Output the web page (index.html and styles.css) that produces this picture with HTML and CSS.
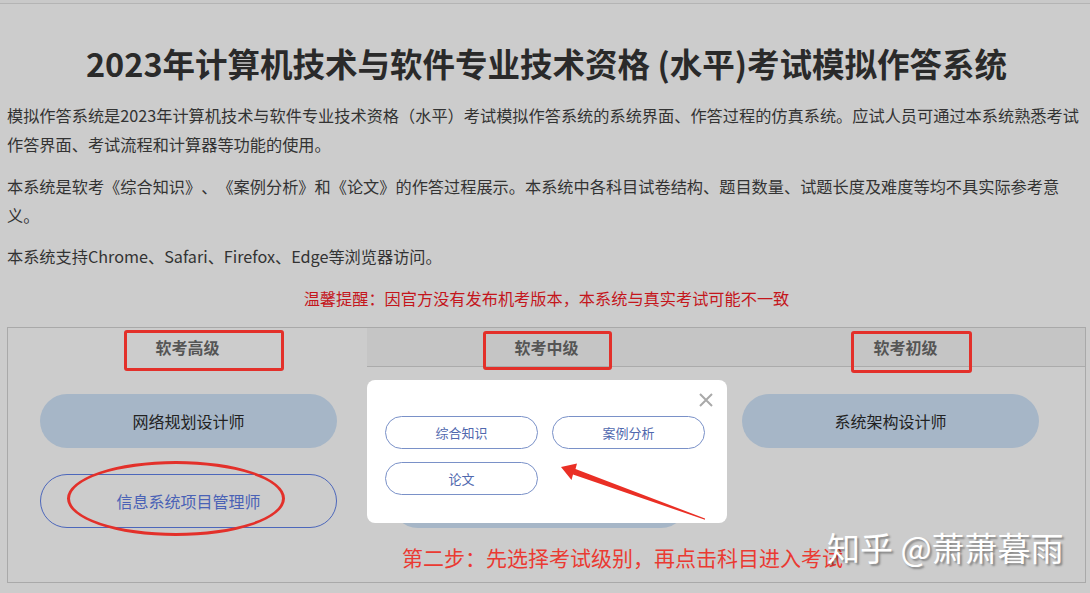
FILE: index.html
```html
<!DOCTYPE html>
<html lang="zh-CN">
<head>
  <meta charset="UTF-8" />
  <title>2023年计算机技术与软件专业技术资格 (水平)考试模拟作答系统</title>
  <link rel="stylesheet" href="styles.css">
</head>
<body>
  <div class="top-edge"></div>

  <h1 class="title">2023年计算机技术与软件专业技术资格 (水平)考试模拟作答系统</h1>

  <p class="intro">模拟作答系统是2023年计算机技术与软件专业技术资格（水平）考试模拟作答系统的系统界面、作答过程的仿真系统。应试人员可通过本系统熟悉考试作答界面、考试流程和计算器等功能的使用。</p>
  <p class="intro">本系统是软考《综合知识》、《案例分析》和《论文》的作答过程展示。本系统中各科目试卷结构、题目数量、试题长度及难度等均不具实际参考意义。</p>
  <p class="intro">本系统支持Chrome、Safari、Firefox、Edge等浏览器访问。</p>
  <p class="warn">温馨提醒：因官方没有发布机考版本，本系统与真实考试可能不一致</p>

  <div class="panel">
    <div class="tabs">
      <div class="tab active">软考高级</div>
      <div class="tab">软考中级</div>
      <div class="tab">软考初级</div>
    </div>
    <div class="cols">
      <div class="col col-1">
        <div class="pill filled">网络规划设计师</div>
        <div class="pill outline">信息系统项目管理师</div>
      </div>
      <div class="col col-2">
        <div class="pill filled">系统集成项目管理工程师</div>
      </div>
      <div class="col col-3">
        <div class="pill filled">系统架构设计师</div>
      </div>
    </div>

    <!-- 科目弹窗 -->
    <div class="modal">
      <span class="close">
        <svg width="14" height="14" viewBox="0 0 14 14"><path d="M1 1 L13 13 M13 1 L1 13" stroke="#a9a9a9" stroke-width="2" fill="none"/></svg>
      </span>
      <div class="subjects">
        <div class="subject">综合知识</div>
        <div class="subject">案例分析</div>
        <div class="subject">论文</div>
      </div>
    </div>
  </div>

  <!-- 标注 -->
  <div class="mark mark-1"></div>
  <div class="mark mark-2"></div>
  <div class="mark mark-3"></div>
  <div class="ring"></div>
  <svg class="arrow" width="1090" height="593" viewBox="0 0 1090 593">
    <polygon points="561,467 577,463.5 575.5,469 705,518.5 705,519.8 573,474.5 571.5,480" fill="#ea2f25"/>
  </svg>
  <div class="step">第二步：先选择考试级别，再点击科目进入考试</div>
  <div class="watermark">知乎 @萧萧暮雨</div>
</body>
</html>
```

FILE: styles.css
```css
body {
  margin: 0;
  padding: 0 4px 0 7px;
  background: #cccccc;
  font-family: "Noto Sans CJK SC", "Liberation Sans", sans-serif;
  color: #333;
  position: relative;
  height: 593px;
  overflow: hidden;
  text-spacing-trim: space-all;
}

.top-edge {
  height: 3px;
  margin: 0 -4px 0 -7px;
  background: #c9c9c9;
  border-bottom: 1px solid #b4b4b4;
}

.title {
  margin: 39px 0 18px;
  font-size: 32.5px;
  line-height: 40px;
  font-weight: bold;
  text-align: center;
  color: #2a2a2a;
}

.intro {
  margin: 0 0 12.5px;
  font-size: 16.2px;
  line-height: 29px;
  color: #333;
}

.warn {
  margin: 13px 0 14px;
  font-size: 16.2px;
  line-height: 29px;
  text-align: center;
  color: #c4161c;
}

.panel {
  position: relative;
  border: 1px solid #a9a9a9;
  height: 254px;
}

.tabs {
  display: grid;
  grid-template-columns: 359px 359px 1fr;
  height: 39px;
}

.tab {
  display: flex;
  justify-content: center;
  align-items: center;
  font-size: 16px;
  font-weight: bold;
  color: #555;
  background: #c5c5c5;
  border-bottom: 1px solid #ababab;
}

.tab.active {
  background: transparent;
  border-bottom-color: transparent;
}

.cols {
  display: grid;
  grid-template-columns: 359px 359px 1fr;
}

.col {
  display: flex;
  flex-direction: column;
  gap: 26px;
  padding-top: 27px;
}

.col-1 { padding-left: 32px; }
.col-2 { padding-left: 24px; padding-top: 107px; }
.col-3 { padding-left: 16px; }

.pill {
  width: 297px;
  height: 54px;
  box-sizing: border-box;
  border-radius: 27px;
  display: flex;
  justify-content: center;
  align-items: center;
  font-size: 16px;
}

.pill.filled {
  background: #a6b6c7;
  color: #222;
}

.pill.outline {
  border: 1px solid #4c67bb;
  color: #4a62b6;
}

.modal {
  position: absolute;
  left: 359px;
  top: 52px;
  width: 360px;
  height: 143px;
  box-sizing: border-box;
  padding: 36px 0 0 18px;
  background: #fff;
  border-radius: 8px;
}

.close {
  position: absolute;
  right: 14px;
  top: 13px;
  line-height: 0;
}

.subjects {
  display: grid;
  grid-template-columns: 153px 153px;
  column-gap: 14px;
  row-gap: 13px;
}

.subject {
  height: 33px;
  box-sizing: border-box;
  border: 1px solid #7a91c8;
  border-radius: 17px;
  display: flex;
  justify-content: center;
  align-items: center;
  font-size: 13px;
  color: #5068ae;
}

.mark {
  position: absolute;
  border: 3px solid #e3302a;
  border-radius: 3px;
  box-sizing: border-box;
}

.mark-1 { left: 124px; top: 330px; width: 160px; height: 41px; }
.mark-2 { left: 483px; top: 331px; width: 129px; height: 39px; }
.mark-3 { left: 851px; top: 331px; width: 121px; height: 42px; }

.ring {
  position: absolute;
  left: 67px;
  top: 461px;
  width: 218px;
  height: 75px;
  box-sizing: border-box;
  border: 3px solid #e3302a;
  border-radius: 50%;
}

.arrow {
  position: absolute;
  left: 0;
  top: 0;
}

.step {
  position: absolute;
  left: 402px;
  top: 543px;
  font-size: 21px;
  line-height: 28px;
  color: #ea3a32;
  white-space: nowrap;
}

.watermark {
  position: absolute;
  left: 827px;
  top: 526px;
  font-size: 33px;
  line-height: 42px;
  color: #fff;
  white-space: nowrap;
  text-shadow: 2px 2px 2px rgba(0, 0, 0, 0.35);
}
```
